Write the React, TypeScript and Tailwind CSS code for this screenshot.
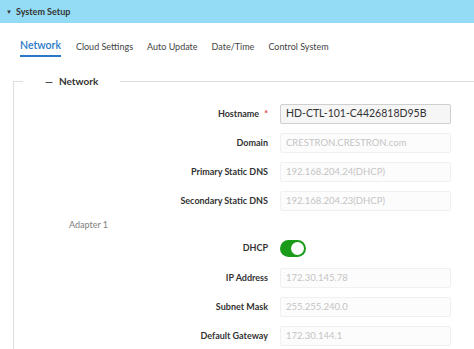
import React from "react";

const font = { fontFamily: "Lato, 'Open Sans', sans-serif" };

function Row({ label, value, required, active }: { label: string; value: string; required?: boolean; active?: boolean }) {
  return (
    <div className="flex items-center h-[20px] mb-[9px]">
      <div className="w-[254px] text-right text-[9px] font-bold text-[#333]">
        {label}
        {required && <span className="text-[#e0434b] ml-[5px]">*</span>}
      </div>
      <div
        className={
          "ml-[12px] w-[171px] h-[20px] flex items-center px-[5px] rounded-[2px] border " +
          (active ? "text-[10.5px] border-[#cfcfcf] bg-[#f6f6f6] text-[#333]" : "text-[9.5px] border-[#f0f0f0] bg-[#fcfcfc] text-[#c4c4c4]")
        }
      >
        {value}
      </div>
    </div>
  );
}

export default function App() {
  return (
    <div className="w-[474px] h-[349px] bg-white overflow-hidden" style={font}>
      <div className="h-[23px] bg-[#94dcf5] flex items-center pl-[6px] text-[9px] text-[#333] font-bold">
        <span className="text-[6px] mr-[4px]">▼</span>
        <span>System Setup</span>
      </div>
      <div className="flex items-end h-[34px] pl-[20px] text-[9px] text-[#444]">
        <div className="mr-[15px] text-[10.5px] text-[#2a78c8] font-semibold border-b-2 border-[#2a78c8] pb-[1px]">Network</div>
        <div className="mr-[14px] pb-[4px]">Cloud Settings</div>
        <div className="mr-[14px] pb-[4px]">Auto Update</div>
        <div className="mr-[14px] pb-[4px]">Date/Time</div>
        <div className="pb-[4px]">Control System</div>
      </div>
      <fieldset className="mt-[18px] ml-[13px] border-t border-l border-[#dedede] pb-[20px]">
        <legend className="ml-[9px] px-[22px] text-[10px] font-bold text-[#333] leading-[12px]">
          <span className="mr-[6px]">—</span>Network
        </legend>
        <div className="pt-[17px]">
          <Row label="Hostname" value="HD-CTL-101-C4426818D95B" required active />
          <Row label="Domain" value="CRESTRON.CRESTRON.com" />
          <Row label="Primary Static DNS" value="192.168.204.24(DHCP)" />
          <Row label="Secondary Static DNS" value="192.168.204.23(DHCP)" />
          <div className="pl-[55px] text-[9px] text-[#808080] h-[14px] leading-[14px] mt-[-2px]">Adapter 1</div>
          <div className="flex items-center h-[18px] mt-[7px] mb-[11px]">
            <div className="w-[254px] text-right text-[9px] font-bold text-[#333]">DHCP</div>
            <div className="ml-[12px] w-[26px] h-[17px] rounded-full bg-[#1a9c1a] relative">
              <div className="absolute right-[2px] top-[2px] w-[13px] h-[13px] rounded-full bg-white" />
            </div>
          </div>
          <Row label="IP Address" value="172.30.145.78" />
          <Row label="Subnet Mask" value="255.255.240.0" />
          <Row label="Default Gateway" value="172.30.144.1" />
        </div>
      </fieldset>
    </div>
  );
}
